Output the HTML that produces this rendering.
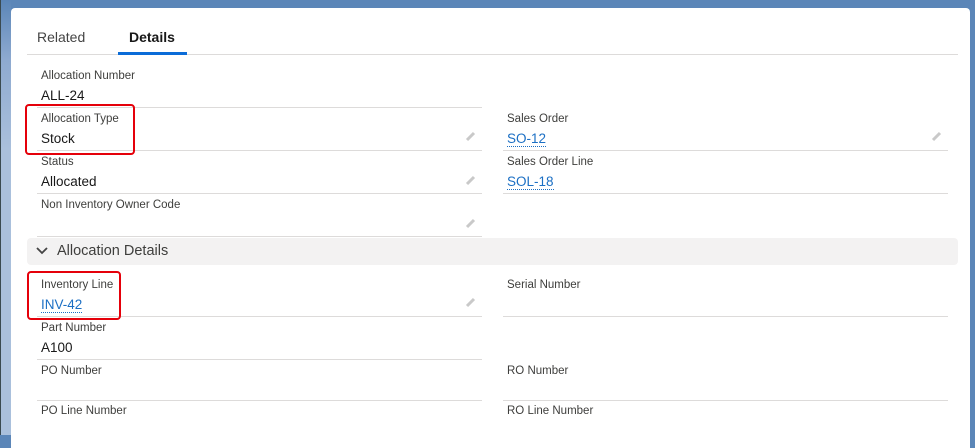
<!DOCTYPE html>
<html><head><style>
body{margin:0;width:975px;height:435px;overflow:hidden;background:#5b86b8;font-family:"Liberation Sans",sans-serif;position:relative}
.card{position:absolute;left:11px;top:8px;width:959px;height:440px;background:#fff;border-radius:4px 4px 0 0}
.t{position:absolute;white-space:nowrap}
.lbl{font-size:11.5px;color:#3e3e3c}
.val{font-size:13.5px;color:#181818}
.lnk{font-size:13.5px;color:#1b6fc4;border-bottom:1px dotted #1b6fc4;line-height:15px}
.hr{position:absolute;height:1px;background:#dddbda}
.pen{position:absolute;width:12px;height:12px}
.red{position:absolute;border:2.5px solid #e5000a;border-radius:4px}
</style></head><body>
<div style="position:absolute;left:0;top:0;width:11px;height:435px;background:linear-gradient(#5b86b8 0px,#8eaad0 60px,#aac0dc 150px,#aac0dc 435px)"></div>
<div style="position:absolute;left:0;top:0;width:1px;height:435px;background:#3a4a50"></div>
<div class="card"></div>
<div class="t" style="left:37px;top:29px;font-size:14px;color:#444">Related</div>
<div class="t" style="left:129px;top:29px;font-size:14px;color:#181818;font-weight:bold">Details</div>
<div class="hr" style="left:27px;top:54px;width:931px"></div>
<div style="position:absolute;left:118px;top:52px;width:69px;height:3px;background:#0b6cd8"></div>

<div class="t lbl" style="left:41px;top:70px">Allocation Number</div>
<div class="t val" style="left:41px;top:88px">ALL-24</div>
<div class="hr" style="left:37px;top:107px;width:445px"></div>

<div class="t lbl" style="left:41px;top:113px">Allocation Type</div>
<div class="t val" style="left:41px;top:131px">Stock</div>
<div class="hr" style="left:37px;top:150px;width:445px"></div>
<div class="t lbl" style="left:507px;top:113px">Sales Order</div>
<div class="t lnk" style="left:507px;top:131px">SO-12</div>
<div class="hr" style="left:503px;top:150px;width:445px"></div>

<div class="t lbl" style="left:41px;top:156px">Status</div>
<div class="t val" style="left:41px;top:174px">Allocated</div>
<div class="hr" style="left:37px;top:193px;width:445px"></div>
<div class="t lbl" style="left:507px;top:156px">Sales Order Line</div>
<div class="t lnk" style="left:507px;top:174px">SOL-18</div>
<div class="hr" style="left:503px;top:193px;width:445px"></div>

<div class="t lbl" style="left:41px;top:199px">Non Inventory Owner Code</div>
<div class="hr" style="left:37px;top:236px;width:445px"></div>

<div style="position:absolute;left:27px;top:238px;width:931px;height:27px;background:#f3f2f2;border-radius:4px"></div>
<svg style="position:absolute;left:36px;top:246px" width="12" height="10"><path d="M1 2 L6 7 L11 2" stroke="#444" stroke-width="1.8" fill="none"/></svg>
<div class="t" style="left:57px;top:243px;font-size:14.5px;color:#3e3e3c">Allocation Details</div>

<div class="t lbl" style="left:41px;top:279px">Inventory Line</div>
<div class="t lnk" style="left:41px;top:297px">INV-42</div>
<div class="hr" style="left:37px;top:316px;width:445px"></div>
<div class="t lbl" style="left:507px;top:279px">Serial Number</div>
<div class="hr" style="left:503px;top:316px;width:445px"></div>

<div class="t lbl" style="left:41px;top:322px">Part Number</div>
<div class="t val" style="left:41px;top:340px">A100</div>
<div class="hr" style="left:37px;top:359px;width:445px"></div>

<div class="t lbl" style="left:41px;top:365px">PO Number</div>
<div class="hr" style="left:37px;top:400px;width:445px"></div>
<div class="t lbl" style="left:507px;top:365px">RO Number</div>
<div class="hr" style="left:503px;top:400px;width:445px"></div>
<div class="t lbl" style="left:41px;top:405px">PO Line Number</div>
<div class="t lbl" style="left:507px;top:405px">RO Line Number</div>

<svg class="pen" style="left:465px;top:130px" viewBox="0 0 12 12"><path d="M2 10 L9 3" stroke="#c9c9c9" stroke-width="3"/></svg>
<svg class="pen" style="left:931px;top:130px" viewBox="0 0 12 12"><path d="M2 10 L9 3" stroke="#c9c9c9" stroke-width="3"/></svg>
<svg class="pen" style="left:465px;top:174px" viewBox="0 0 12 12"><path d="M2 10 L9 3" stroke="#c9c9c9" stroke-width="3"/></svg>
<svg class="pen" style="left:465px;top:217px" viewBox="0 0 12 12"><path d="M2 10 L9 3" stroke="#c9c9c9" stroke-width="3"/></svg>
<svg class="pen" style="left:465px;top:296px" viewBox="0 0 12 12"><path d="M2 10 L9 3" stroke="#c9c9c9" stroke-width="3"/></svg>

<div class="red" style="left:25px;top:104px;width:106px;height:47px"></div>
<div class="red" style="left:27px;top:271px;width:90px;height:45px"></div>
</body></html>
